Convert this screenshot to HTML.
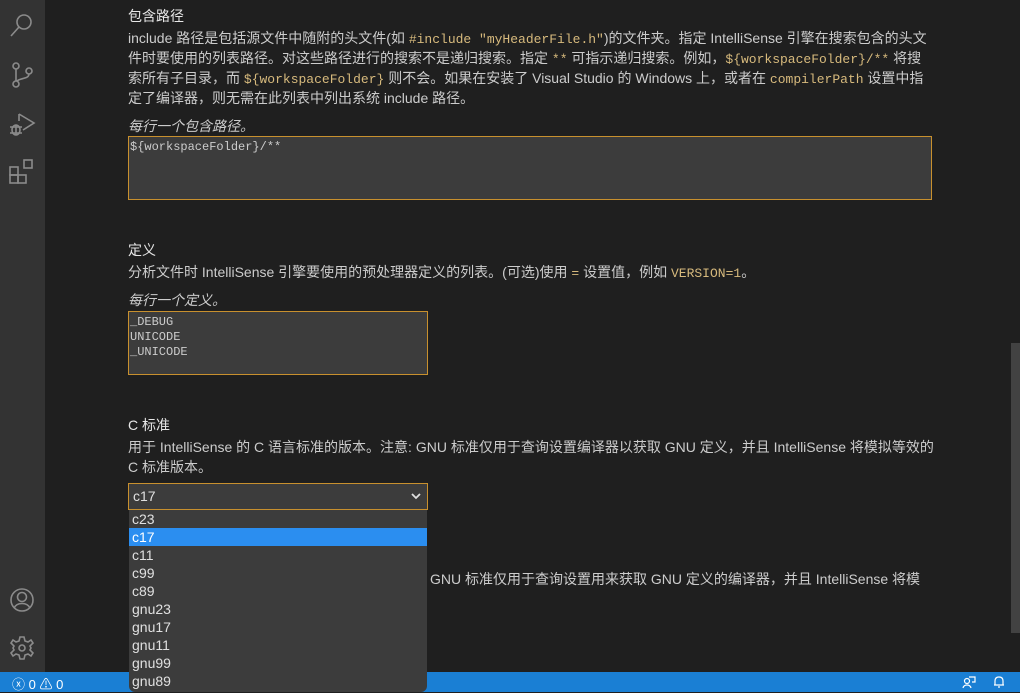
<!DOCTYPE html>
<html><head><meta charset="utf-8"><style>
*{margin:0;padding:0;box-sizing:border-box}
body{width:1020px;height:692px;overflow:hidden;background:#1f1f1f;font-family:"Liberation Sans","Noto Sans CJK SC",sans-serif;font-size:14px;color:#cccccc;position:relative}
.a{position:absolute;white-space:nowrap}
.act{position:absolute;left:0;top:0;width:45px;height:672px;background:#333333}
.code{font-family:"Liberation Mono",monospace;font-size:13px;color:#d7ba7d;line-height:1}
.t{font-weight:normal;color:#e7e7e7}
.ln{height:20px;line-height:20px;overflow:visible}
.ta{position:absolute;background:#3c3c3c;border:1px solid #c8902e;font-family:"Liberation Mono",monospace;font-size:12px;line-height:15px;color:#cccccc;padding:3px 1px}
.sel{position:absolute;left:128px;top:483px;width:300px;height:27px;background:#3c3c3c;border:1px solid #c8902e;padding:4px 4px;font-size:14px;color:#e0e0e0}
.dd{position:absolute;z-index:5;left:129px;top:510px;width:298px;height:182px;background:#3c3c3c;border-radius:0 0 6px 6px;font-size:14px;color:#e0e0e0}
.dd div{height:18px;line-height:18px;padding-left:3px}
.dd .h{background:#2b8ef0;color:#fff}
.sb{position:absolute;left:0;top:672px;width:1020px;height:20px;background:#1a7fd4;color:#fff;font-size:13px}
.it{font-style:italic}
</style></head><body>
<div class="act">
<svg class="a" style="left:8px;top:11px" width="28" height="28" viewBox="0 0 28 28" fill="none" stroke="#8b8b8b" stroke-width="1.6"><circle cx="16" cy="11" r="7"/><path d="M11 16 L3 25"/></svg>
<svg class="a" style="left:8px;top:60px" width="28" height="30" viewBox="0 0 28 30" fill="none" stroke="#8b8b8b" stroke-width="1.6"><circle cx="8" cy="6" r="3"/><circle cx="8" cy="24" r="3"/><circle cx="21" cy="11" r="3"/><path d="M8 9 V21 M21 14 C21 19 12 18 9 21"/></svg>
<svg class="a" style="left:8px;top:110px" width="28" height="28" viewBox="0 0 28 28" fill="none" stroke="#8b8b8b" stroke-width="1.6"><path d="M11 4 L26 13 L15 20"/><path d="M11 4 V11"/><ellipse cx="8" cy="20" rx="4" ry="5"/><path d="M2 17 H14 M2 23 H14 M8 15 V25"/></svg>
<svg class="a" style="left:8px;top:158px" width="28" height="28" viewBox="0 0 28 28" fill="none" stroke="#8b8b8b" stroke-width="1.6"><rect x="2" y="9" width="8" height="8"/><rect x="2" y="17" width="8" height="8"/><rect x="10" y="17" width="8" height="8"/><rect x="16" y="2" width="8" height="8"/></svg>
<svg class="a" style="left:8px;top:586px" width="28" height="28" viewBox="0 0 28 28" fill="none" stroke="#8b8b8b" stroke-width="1.6"><circle cx="14" cy="14" r="11"/><circle cx="14" cy="11" r="4.5"/><path d="M6 22 C9 16 19 16 22 22"/></svg>
<svg class="a" style="left:8px;top:634px" width="28" height="28" viewBox="0 0 28 28" fill="none" stroke="#8b8b8b" stroke-width="1.6"><circle cx="14" cy="14" r="3"/><path d="M12 3 H16 L17 7 L20 8 L23 6 L25 9 L22 12 L23 14 L22 16 L25 19 L23 22 L20 20 L17 21 L16 25 H12 L11 21 L8 20 L5 22 L3 19 L6 16 L5 14 L6 12 L3 9 L5 6 L8 8 L11 7 Z"/></svg>
</div>
<div class="a t" style="left:128px;top:6px">包含路径</div>
<div class="a" style="left:128px;top:28px">
<div class="ln">include 路径是包括源文件中随附的头文件(如 <span class="code">#include "myHeaderFile.h"</span>)的文件夹。指定 IntelliSense 引擎在搜索包含的头文</div>
<div class="ln">件时要使用的列表路径。对这些路径进行的搜索不是递归搜索。指定 <span class="code">**</span> 可指示递归搜索。例如，<span class="code">${workspaceFolder}/**</span> 将搜</div>
<div class="ln">索所有子目录，而 <span class="code">${workspaceFolder}</span> 则不会。如果在安装了 Visual Studio 的 Windows 上，或者在 <span class="code">compilerPath</span> 设置中指</div>
<div class="ln">定了编译器，则无需在此列表中列出系统 include 路径。</div></div>
<div class="a it" style="left:128px;top:116px">每行一个包含路径。</div>
<div class="ta" style="left:128px;top:136px;width:804px;height:64px">${workspaceFolder}/**</div>
<div class="a t" style="left:128px;top:240px">定义</div>
<div class="a" style="left:128px;top:262px">分析文件时 IntelliSense 引擎要使用的预处理器定义的列表。(可选)使用 <span class="code">=</span> 设置值，例如 <span class="code">VERSION=1</span>。</div>
<div class="a it" style="left:128px;top:290px">每行一个定义。</div>
<div class="ta" style="left:128px;top:311px;width:300px;height:64px">_DEBUG<br>UNICODE<br>_UNICODE</div>
<div class="a t" style="left:128px;top:415px">C 标准</div>
<div class="a" style="left:128px;top:437px;line-height:20px">用于 IntelliSense 的 C 语言标准的版本。注意: GNU 标准仅用于查询设置编译器以获取 GNU 定义，并且 IntelliSense 将模拟等效的<br>C 标准版本。</div>
<div class="sel">c17<svg class="a" style="right:6px;top:9px" width="10" height="7" viewBox="0 0 10 7" fill="none" stroke="#e0e0e0" stroke-width="1.8"><path d="M1 1 L5 5 L9 1"/></svg></div>
<div class="a" style="left:430px;top:569px">GNU 标准仅用于查询设置用来获取 GNU 定义的编译器，并且 IntelliSense 将模</div>
<div class="dd"><div>c23</div><div class="h">c17</div><div>c11</div><div>c99</div><div>c89</div><div>gnu23</div><div>gnu17</div><div>gnu11</div><div>gnu99</div><div>gnu89</div></div>
<div class="a" style="left:1011px;top:343px;width:9px;height:290px;background:#424242"></div>
<div class="sb">
<span class="a" style="left:12px;top:2px">ⓧ 0 ⚠ 0</span>
<svg class="a" style="left:962px;top:3px" width="14" height="14" viewBox="0 0 14 14" fill="none" stroke="#fff" stroke-width="1.2"><circle cx="5" cy="6" r="2.5"/><path d="M1 13 C2 9 8 9 9 13 M7 2 H13 V7 H10"/></svg>
<svg class="a" style="left:993px;top:3px" width="12" height="14" viewBox="0 0 12 14" fill="none" stroke="#fff" stroke-width="1.2"><path d="M2 10 V6 C2 3 4 2 6 2 C8 2 10 3 10 6 V10 H2 Z M1 10 H11 M5 12 H7"/></svg>
</div>
</body></html>
